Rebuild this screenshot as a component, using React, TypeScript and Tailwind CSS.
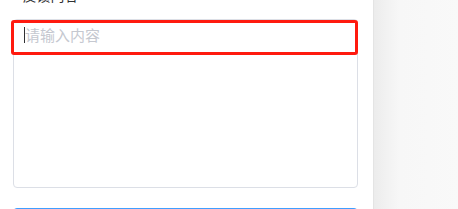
import React from 'react';

const App = () => {
  return (
    <div
      className="flex h-[209px] w-[458px] overflow-hidden bg-white"
      style={{ fontFamily: '"Liberation Sans", "Noto Sans CJK SC", sans-serif' }}
    >
      <div className="w-[373px] shrink-0 bg-white px-[13px]">
        {/* label, cut off by the top edge */}
        <div className="-mt-[15px] h-[22px] text-[14px] leading-[22px] text-[#303133]">
          <span className="mr-1 text-[#f56c6c]">*</span>反馈内容
        </div>

        <div className="relative mt-[12px]">
          <textarea
            className="block h-[169px] w-[345px] resize-none rounded-[4px] border border-[#dcdfe6] bg-white px-[11px] py-[5px] text-[15px] leading-[21px] text-[#606266] caret-[#303133] outline-none placeholder:text-[#c5c8d0]"
            placeholder="请输入内容"
            autoFocus
          />
          {/* text cursor */}
          <span className="pointer-events-none absolute left-[11px] top-[8px] h-[16px] w-px bg-[#303133]" />
          {/* highlight box */}
          <div className="pointer-events-none absolute left-[-2px] top-[1px] h-[35px] w-[347px] rounded-[3px] border-[3px] border-[#ff1a0f]" />
        </div>

        <button className="mt-[20px] h-[40px] w-[345px] rounded-[4px] border border-[#409eff] bg-[#409eff] text-[14px] text-white">
          提交
        </button>
      </div>

      <div className="flex-1 border-l border-[#e4e4e4] bg-gradient-to-r from-[#ececec] via-[#f7f7f7] via-30% to-[#f9f9f9]" />
    </div>
  );
};

export default App;
